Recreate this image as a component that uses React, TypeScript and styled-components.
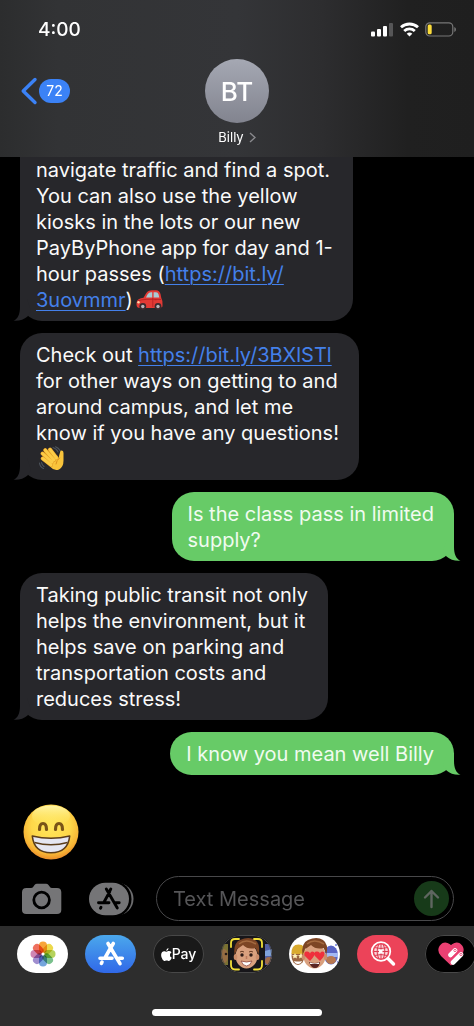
import React from "react";
import styled, { createGlobalStyle } from "styled-components";

const GlobalStyle = createGlobalStyle`
  * { box-sizing: border-box; }
  body {
    margin: 0;
    background: #000;
    color: #fff;
    font-family: Inter, "Liberation Sans", sans-serif;
  }
  button { border: 0; padding: 0; background: none; color: inherit; font: inherit; cursor: pointer; }
  svg { display: block; flex: none; }
`;

const Screen = styled.div`
  display: flex;
  flex-direction: column;
  height: 100vh;
  overflow: hidden;
`;

const Header = styled.header`
  flex: none;
  height: 157px;
  background: linear-gradient(90deg, #2c2d2e 0%, #323335 12%, #343538 50%, #2d2d2f 68%, #202020 86%, #1f1f1f 100%);
`;

const StatusBar = styled.div`
  display: flex;
  align-items: center;
  justify-content: space-between;
  height: 59px;
  padding: 0 17px 0 38px;
`;

const Clock = styled.time`
  font-size: 19px;
  line-height: 24px;
  font-weight: 500;
`;

const StatusIcons = styled.div`
  display: flex;
  align-items: center;
  gap: 6px;
`;

const NavRow = styled.nav`
  display: grid;
  grid-template-columns: 1fr auto 1fr;
  align-items: start;
  padding: 0 20px;
`;

const BackButton = styled.button`
  display: flex;
  align-items: center;
  justify-self: start;
  gap: 1px;
  margin-top: 18px;
`;

const Badge = styled.span`
  width: 31px;
  border-radius: 12px;
  background: #3b82f6;
  font-size: 14px;
  line-height: 24px;
  text-align: center;
`;

const Contact = styled.button`
  grid-column: 2;
  display: flex;
  flex-direction: column;
  align-items: center;
  gap: 6px;
`;

const Avatar = styled.span`
  width: 64px;
  height: 64px;
  border-radius: 50%;
  background: linear-gradient(#a5a8b3, #82848f);
  font-size: 26px;
  line-height: 66px;
  font-weight: 500;
  text-align: center;
`;

const ContactName = styled.span`
  display: flex;
  align-items: center;
  gap: 5px;
  font-size: 13px;
  line-height: 16px;
`;

const Thread = styled.main`
  flex: 1;
  min-height: 0;
  display: flex;
  flex-direction: column;
  justify-content: flex-end;
  gap: 12px;
  overflow: hidden;
  padding: 0 20px 16px;
`;

const Bubble = styled.div<{ $sent?: boolean; $continued?: boolean }>`
  position: relative;
  flex: none;
  align-self: ${(p) => (p.$sent ? "flex-end" : "flex-start")};
  padding: 9px 20px 8px 16px;
  border-radius: ${(p) => (p.$continued ? "0 0 22px 22px" : "22px")};
  background: ${(p) => (p.$sent ? "#67cb67" : "#27272b")};
  color: ${(p) => (p.$sent ? "#f0fbf0" : "#fafafa")};
  font-size: 20px;
  line-height: 26px;
  white-space: pre-line;
`;

const TailShape = styled.svg<{ $sent?: boolean }>`
  position: absolute;
  bottom: 0;
  ${(p) => (p.$sent ? "right: -7px; transform: scaleX(-1);" : "left: -7px;")}
  fill: ${(p) => (p.$sent ? "#67cb67" : "#27272b")};
`;

const TextLink = styled.a`
  color: #4480ea;
  text-decoration: underline;
  text-decoration-thickness: 1px;
  text-underline-offset: 3px;
`;

const InlineEmoji = styled.span`
  display: inline-flex;
  align-items: center;
  height: 26px;
  margin-left: 2px;
  vertical-align: top;
`;

const BigEmoji = styled.div`
  margin-top: 17px;
  padding-left: 3px;
`;

const Composer = styled.form`
  flex: none;
  display: flex;
  align-items: center;
  padding: 0 20px 5px 22px;
`;

const CameraButton = styled.button`
  margin-right: 27px;
`;

const AppsButton = styled.button`
  margin-right: 22px;
`;

const Field = styled.div`
  flex: 1;
  min-width: 0;
  display: flex;
  align-items: center;
  height: 45px;
  padding: 0 4px 0 16px;
  border: 1px solid #48484a;
  border-radius: 23px;
`;

const MessageInput = styled.input`
  flex: 1;
  min-width: 0;
  border: 0;
  padding: 0;
  outline: 0;
  background: none;
  color: #fff;
  font: 20px/26px Inter, "Liberation Sans", sans-serif;
  &::placeholder { color: #565658; opacity: 1; }
`;

const SendButton = styled.button`
  display: grid;
  place-items: center;
  width: 35px;
  height: 35px;
  border-radius: 50%;
  background: #173a19;
`;

const Drawer = styled.footer`
  flex: none;
  height: 100px;
  display: flex;
  flex-direction: column;
  align-items: center;
  justify-content: space-between;
  padding: 9px 0 10px;
  background: #2d2d2d;
`;

const AppStrip = styled.div`
  align-self: stretch;
  display: flex;
  gap: 17px;
  overflow: hidden;
  padding-left: 17px;
`;

const AppPill = styled.button<{ $bg: string; $edge?: string }>`
  flex: none;
  display: flex;
  align-items: center;
  justify-content: center;
  width: 51px;
  height: 38px;
  overflow: hidden;
  border-radius: 19px;
  background: ${(p) => p.$bg};
  box-shadow: inset 0 0 0 1px ${(p) => p.$edge ?? "transparent"};
`;

const PayLabel = styled.span`
  font-size: 14px;
  line-height: 20px;
  font-weight: 500;
`;

const HomeIndicator = styled.div`
  width: 36%;
  height: 7px;
  border-radius: 4px;
  background: #fff;
`;

const Tail = ({ sent }: { sent?: boolean }) => (
  <TailShape $sent={sent} width="20" height="22" viewBox="0 0 20 22" aria-hidden="true">
    <path d="M7 0V8C7 15 5 20 .5 21.7C6 22.2 11 20.5 14.5 17.5L18 12L14 0Z" />
  </TailShape>
);

const Signal = () => (
  <svg width="23" height="15" viewBox="0 0 23 15" fill="#fff">
    <rect x="0" y="9.5" width="4" height="5" rx="1" />
    <rect x="6" y="7" width="4" height="7.5" rx="1" />
    <rect x="12" y="4" width="4" height="10.5" rx="1" />
    <rect x="18" y="1" width="4" height="13.5" rx="1" fill="#565657" />
  </svg>
);

const Wifi = () => (
  <svg width="19" height="15" viewBox="0 0 19 15" fill="none" stroke="#fff" strokeWidth="2.8">
    <path d="M1 5.3C5.8.9 13.2.9 18 5.3" />
    <path d="M4.2 8.9C7.2 6.1 11.8 6.1 14.8 8.9" />
    <path d="M6.7 11.7C8.4 10 10.6 10 12.3 11.7L9.5 14.6Z" fill="#fff" stroke="none" />
  </svg>
);

const Battery = () => (
  <svg width="32" height="15" viewBox="0 0 32 15">
    <rect x=".8" y=".8" width="27" height="13.2" rx="4" fill="none" stroke="#777" strokeWidth="1.2" />
    <rect x="2.7" y="2.6" width="4" height="9.6" rx="1.5" fill="#fbdc3b" />
    <path d="M29.3 5C31.5 6 31.5 9 29.3 10Z" fill="#777" />
  </svg>
);

const Car = () => (
  <svg width="29" height="22" viewBox="0 0 29 22">
    <path d="M1.500 14.500C1.500 10.500 5 9 8.500 8.700L11 4.500Q13 1.200 17 1.200H21Q24.500 1.200 25.500 5L26.300 9Q27.500 11 27.500 15V17.500L25.500 19H4Q1.500 18.500 1.500 16Z" fill="#e23a35" />
    <path d="M11 8.600L12.500 5.600Q14 3.200 16 3.200H17.200V8.600ZM18.600 3.200H21Q23 3.200 23.600 5.500L24.300 8.600H18.600Z" fill="#a9cbd3" />
    <path d="M17.800 9V18M19.500 10.800H21.500M3 11.800Q9 9.500 26 10.500" stroke="#b31f22" strokeWidth=".8" fill="none" />
    <circle cx="7.800" cy="17.500" r="3.400" fill="#3b2a2e" /><circle cx="7.800" cy="17.500" r="1.700" fill="#b9b5bb" />
    <circle cx="23" cy="17.500" r="3.400" fill="#3b2a2e" /><circle cx="23" cy="17.500" r="1.700" fill="#b9b5bb" />
    <circle cx="3.500" cy="13.200" r="1.200" fill="#ffd9a8" />
  </svg>
);

const Wave = () => (
  <svg width="28" height="26" viewBox="0 0 28 26" fill="none" strokeLinecap="round">
    <path d="M15 1.500Q19 3 20 6M17.500 .8Q20.500 2 22 4.500M1.500 17Q2 21 5.500 22.500M3.500 16.500Q4 19 6 20.500" stroke="#4c535b" strokeWidth="1.200" />
    <path d="M12.500 21L7 14.500Q8.500 11 12 9L19 9.500L20.500 12Q21.500 8 22.500 4.800Q25.500 3.500 25.500 7V14.500Q25.500 21 21 23.500Q16.500 25.500 12.500 21Z" fill="#f9c43b" />
    <path d="M13 19L4.700 12.500M14 16L4.500 7.500M16 14L7.200 4.200M18.500 12L12 3.500" stroke="#e39b22" strokeWidth="4" />
    <path d="M13 19L4.700 12.500M14 16L4.500 7.500M16 14L7.200 4.200M18.500 12L12 3.500" stroke="#fbcc47" strokeWidth="3" />
    <path d="M18 18Q18.500 14 21.500 12" stroke="#dc9220" strokeWidth="1" />
  </svg>
);

const Grin = () => (
  <svg width="56" height="56" viewBox="0 0 56 56" role="img" aria-label="Beaming face">
    <defs>
      <radialGradient id="face" cx=".5" cy=".38" r=".64">
        <stop offset="0" stopColor="#ffe65c" />
        <stop offset=".55" stopColor="#fed84a" />
        <stop offset=".82" stopColor="#f7b536" />
        <stop offset="1" stopColor="#e98628" />
      </radialGradient>
      <linearGradient id="shine" x1="0" y1="0" x2="0" y2="1">
        <stop offset="0" stopColor="#fff6a8" />
        <stop offset="1" stopColor="#ffe65c" stopOpacity="0" />
      </linearGradient>
    </defs>
    <circle cx="28" cy="28" r="27.500" fill="url(#face)" />
    <ellipse cx="28" cy="12" rx="19" ry="10.500" fill="url(#shine)" />
    <path d="M16.500 25.500Q16.500 19.500 20 19.500T23.500 25.500M32.500 25.500Q32.500 19.500 36 19.500T39.500 25.500" fill="none" stroke="#795318" strokeWidth="3.200" strokeLinecap="round" />
    <path d="M9.300 32Q28 36.500 46.700 32Q45 48.700 28 48.700T9.300 32Z" fill="#e5e6f2" stroke="#5b3d1b" strokeWidth="1.600" strokeLinejoin="round" />
    <path d="M11.500 38.500Q28 43 44.500 38.500" fill="none" stroke="#5b3d1b" strokeWidth="1.500" />
  </svg>
);

const Camera = () => (
  <svg width="40" height="32" viewBox="0 0 40 32">
    <path d="M4.500 5H9Q10.500 5 11.300 3.700L12.500 2Q13.500.700 15 .700H24Q25.500.700 26.500 2L27.800 3.700Q28.500 5 30 5H35Q39.300 5 39.300 9.300V27Q39.300 31 35 31H4.300Q0 31 0 27V9.300Q0 5 4.500 5Z" fill="#757577" />
    <circle cx="19.600" cy="17" r="7.800" fill="none" stroke="#000" strokeWidth="2.800" />
  </svg>
);

const AppsIcon = () => (
  <svg width="45" height="34" viewBox="0 0 45 34" fill="none">
    <rect x="7" y=".7" width="37.500" height="32.600" rx="16.300" fill="#6c6c6e" />
    <rect x="1.500" y="-.8" width="41" height="35.600" rx="17.500" fill="#000" />
    <rect x="0" y=".7" width="40" height="32.600" rx="16.300" fill="#757577" />
    <path d="M20.800 9.500L14.800 20.500M12 25.300L11.500 26.200M17.300 7L28.300 26M21.800 7L20.600 9.200M9.500 20.800H20M26 20.800H30.200" stroke="#000" strokeWidth="2.900" strokeLinecap="round" />
  </svg>
);

const PHOTO_PETALS = ["#f7a53a", "#ecd94c", "#b5d25c", "#79c08c", "#74a5dc", "#a08fd0", "#cf86b4", "#ee705f"];

const PhotosIcon = () => (
  <svg width="26" height="26" viewBox="-13 -13 26 26">
    {PHOTO_PETALS.map((c, i) => (
      <rect key={c} x="-4" y="-12.500" width="8" height="11.500" rx="4" fill={c} style={{ mixBlendMode: "multiply" }} transform={`rotate(${i * 45})`} />
    ))}
    <circle r="1.500" fill="#fff" />
  </svg>
);

const StoreIcon = () => (
  <svg width="28" height="26" viewBox="0 0 28 26" fill="none" stroke="#fff" strokeWidth="3.600" strokeLinecap="round">
    <path d="M15 4.500L8.500 16M5 21.200L4.400 22.300M11 2.500L23 22.700M16.300 2.500L14.800 5M3 17.200H15M22 17.200H25.300" />
  </svg>
);

const AppleMark = () => (
  <svg width="11" height="13" viewBox="0 0 11 13" fill="#fff">
    <path d="M7.500 0Q7.700 2.500 5.300 3Q5.200 .8 7.500 0ZM5.500 3.700C6.300 3.700 6.800 3.100 8 3.100Q9.600 3.100 10.500 4.500Q8.900 5.400 8.900 7.100Q8.900 9 10.800 9.800Q9.500 12.900 8.100 12.900C7.100 12.900 6.800 12.400 5.700 12.400S4.200 12.900 3.300 12.900Q1.700 12.900.6 9.600Q-.5 6 1 4.300Q1.900 3.200 3.200 3.200C4.300 3.200 4.800 3.700 5.500 3.700Z" />
  </svg>
);

const Face = () => (
  <g>
    <ellipse cx="25.500" cy="21" rx="11" ry="12.500" fill="#d9a07e" />
    <ellipse cx="14.500" cy="22" rx="1.800" ry="3" fill="#cc8d6b" />
    <ellipse cx="36.500" cy="22" rx="1.800" ry="3" fill="#cc8d6b" />
    <path d="M13.500 20Q12 8 19 5Q28 1 34 5Q40 9 37.300 20Q36 15 34.500 13Q27 15 22 10Q18 13 16 14Q15 17 13.500 20Z" fill="#7d4524" />
    <path d="M18 9Q25 3 35 9" stroke="#a3693f" strokeWidth="1.500" fill="none" />
  </g>
);

const MemojiIcon = () => (
  <svg width="51" height="38" viewBox="0 0 51 38">
    <path d="M0 9H7V30H0Z" fill="#7a7132" /><ellipse cx="3" cy="21" rx="4" ry="7" fill="#966d43" /><circle cx="5" cy="19" r="1.300" fill="#241b17" />
    <path d="M44 9H51V30H44Z" fill="#5360a5" /><path d="M44 16L51 14V21H44Z" fill="#7fa2dc" /><ellipse cx="48" cy="26" rx="4" ry="4" fill="#a26c49" />
    <Face />
    <circle cx="21" cy="20" r="1.700" fill="#2f1c18" /><circle cx="30" cy="20" r="1.700" fill="#2f1c18" />
    <path d="M19 17Q21 15.500 23 17M28 17Q30 15.500 32 17" stroke="#683d27" strokeWidth="1" fill="none" />
    <path d="M25.500 21V24" stroke="#bd795c" strokeWidth="1.500" />
    <path d="M20 26Q25.500 28 31 26Q29 31 25.500 31T20 26Z" fill="#fff" stroke="#8d453c" strokeWidth=".8" />
    <path d="M10 12V8Q10 4 14 4H18M33 4H37Q41 4 41 8V12M41 26V30Q41 34.500 37 34.500H33M18 34.500H14Q10 34.500 10 30V26" fill="none" stroke="#f1df38" strokeWidth="1.800" strokeLinecap="round" />
    <rect x=".5" y=".5" width="50" height="37" rx="18.500" fill="none" stroke="#484848" />
  </svg>
);

const StickersIcon = () => (
  <svg width="51" height="38" viewBox="0 0 51 38">
    <ellipse cx="9" cy="21" rx="6.500" ry="9" fill="#9b6540" />
    <path d="M2.500 19Q2 9.500 9.500 9.500T16 19Z" fill="#d9aa2e" />
    <path d="M6 18L7 20L9 20.200L7.500 21.500L8 23.500L6 22.500L4 23.500L4.500 21.500L3 20.200L5 20ZM12 18L13 20L15 20.200L13.500 21.500L14 23.500L12 22.500L10 23.500L10.500 21.500L9 20.200L11 20Z" fill="#fff2b7" />
    <path d="M5 26Q9 27 13 26Q12 29 9 29T5 26Z" fill="#fff" />
    <ellipse cx="42" cy="20" rx="7" ry="9.500" fill="#5965c4" /><path d="M36 18H49V22H36Z" fill="#a3b9f4" /><ellipse cx="42" cy="25" rx="5" ry="4" fill="#b87850" />
    <circle cx="47" cy="10" r="1" fill="#6e7ed8" /><circle cx="49" cy="27" r="1" fill="#6e7ed8" />
    <Face />
    <path d="M21 26L15.500 20.500Q14.500 16 18.300 16.500Q20.500 16.500 21 18.500Q22 15.500 25 17Q27 20 21 26ZM31 26L25.500 20.500Q24.500 16 28.300 16.500Q30.500 16.500 31 18.500Q32 15.500 35 17Q37 20 31 26Z" fill="#ef2f3c" />
    <path d="M20 27Q26 29 31 27Q30 33 26 33T20 27Z" fill="#592522" /><path d="M21 27.500Q26 29.500 30 27.500V29H21Z" fill="#fff" />
  </svg>
);

const ImagesIcon = () => (
  <svg width="26" height="26" viewBox="0 0 26 26" fill="none" stroke="#fff" strokeLinecap="round">
    <circle cx="11" cy="10.500" r="9.300" strokeWidth="1.700" />
    <circle cx="11" cy="10.500" r="6.900" fill="#fbd3d8" stroke="none" />
    <path d="M11 3.500V17.500M4.300 10.500H17.700M5.500 6.800Q11 8.300 16.500 6.800M5.500 14.300Q11 12.800 16.500 14.300M8.500 4Q5.600 10.500 8.500 17M13.500 4Q16.400 10.500 13.500 17" stroke="#d93b50" strokeWidth="1" />
    <path d="M9 8.500H12.500V12.500H9Z" fill="#fff" stroke="none" />
    <path d="M18 17.500L23.500 23" strokeWidth="3.400" />
  </svg>
);

const DigitalTouchIcon = () => (
  <svg width="26" height="24" viewBox="0 0 26 24">
    <path d="M13 23.500L3 14Q-1.500 9 1.500 4Q6-2 12 2.300L13 3.200L14 2.300Q20-2 24.500 4Q27.500 9 23 14Z" fill="#eb4072" />
    <path d="M17 8.500L12.500 13M23 12.500L15 20.500" stroke="#fff" strokeWidth="4.600" strokeLinecap="round" />
    <circle cx="17" cy="8.500" r="1.200" fill="none" stroke="#eb4072" strokeWidth=".8" />
    <circle cx="23" cy="12.500" r="1.200" fill="none" stroke="#eb4072" strokeWidth=".8" />
    <path d="M20.500 9L12 17.500" stroke="#eb4072" strokeWidth="1" fill="none" />
  </svg>
);

export default function App() {
  return (
    <Screen>
      <GlobalStyle />
      <Header>
        <StatusBar>
          <Clock>4:00</Clock>
          <StatusIcons><Signal /><Wifi /><Battery /></StatusIcons>
        </StatusBar>
        <NavRow>
          <BackButton aria-label="Back, 72 unread">
            <svg width="18" height="28" viewBox="0 0 18 28" fill="none" stroke="#3b82f6" strokeWidth="3.400" strokeLinecap="round" strokeLinejoin="round">
              <path d="M15 2.500L3.200 14L15 25.500" />
            </svg>
            <Badge>72</Badge>
          </BackButton>
          <Contact>
            <Avatar>BT</Avatar>
            <ContactName>
              Billy
              <svg width="7" height="11" viewBox="0 0 7 11" fill="none" stroke="#8a8a8e" strokeWidth="1.400"><path d="M1 1L6 5.500L1 10" /></svg>
            </ContactName>
          </Contact>
        </NavRow>
      </Header>

      <Thread>
        <Bubble $continued>
          {"navigate traffic and find a spot.\nYou can also use the yellow\nkiosks in the lots or our new\nPayByPhone app for day and 1-\nhour passes ("}
          <TextLink href="#parking">{"https://bit.ly/\n3uovmmr"}</TextLink>)<InlineEmoji><Car /></InlineEmoji>
          <Tail />
        </Bubble>
        <Bubble>
          Check out <TextLink href="#transit">https://bit.ly/3BXlSTl</TextLink>
          {"\nfor other ways on getting to and\naround campus, and let me\nknow if you have any questions!\n"}
          <InlineEmoji><Wave /></InlineEmoji>
          <Tail />
        </Bubble>
        <Bubble $sent>
          {"Is the class pass in limited\nsupply?"}
          <Tail sent />
        </Bubble>
        <Bubble>
          {"Taking public transit not only\nhelps the environment, but it\nhelps save on parking and\ntransportation costs and\nreduces stress!"}
          <Tail />
        </Bubble>
        <Bubble $sent>
          I know you mean well Billy
          <Tail sent />
        </Bubble>
        <BigEmoji><Grin /></BigEmoji>
      </Thread>

      <Composer onSubmit={(e) => e.preventDefault()}>
        <CameraButton type="button" aria-label="Camera"><Camera /></CameraButton>
        <AppsButton type="button" aria-label="Apps"><AppsIcon /></AppsButton>
        <Field>
          <MessageInput aria-label="Text Message" placeholder="Text Message" />
          <SendButton type="submit" aria-label="Send">
            <svg width="17" height="20" viewBox="0 0 17 20" fill="none" stroke="#5f6660" strokeWidth="2.400" strokeLinecap="round" strokeLinejoin="round">
              <path d="M8.500 18V2M2 8.500L8.500 2L15 8.500" />
            </svg>
          </SendButton>
        </Field>
      </Composer>

      <Drawer>
        <AppStrip>
          <AppPill $bg="#fff" aria-label="Photos"><PhotosIcon /></AppPill>
          <AppPill $bg="linear-gradient(#4ba8ec, #3068e8)" aria-label="App Store"><StoreIcon /></AppPill>
          <AppPill $bg="#191919" $edge="#484848"><AppleMark /><PayLabel>Pay</PayLabel></AppPill>
          <AppPill $bg="#17161a" aria-label="Memoji"><MemojiIcon /></AppPill>
          <AppPill $bg="#fff" aria-label="Memoji stickers"><StickersIcon /></AppPill>
          <AppPill $bg="#ec4359" aria-label="Images"><ImagesIcon /></AppPill>
          <AppPill $bg="#000" $edge="#484848" aria-label="Digital Touch"><DigitalTouchIcon /></AppPill>
        </AppStrip>
        <HomeIndicator />
      </Drawer>
    </Screen>
  );
}
